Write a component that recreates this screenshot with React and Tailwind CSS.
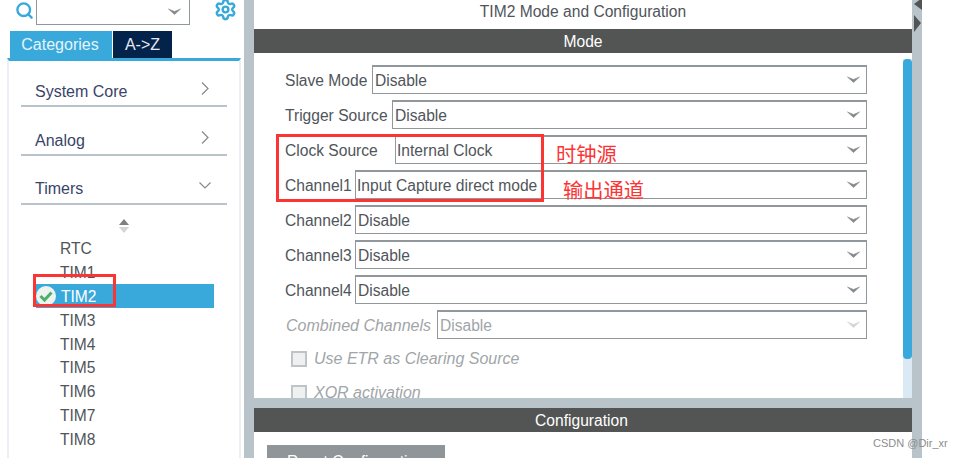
import React from "react";
import { Search, Settings } from "lucide-react";

function Chev({ light }) {
  const c = light ? "#d2d5d7" : "#85898c";
  return (
    <svg width="13" height="8" viewBox="0 0 13 8" className="shrink-0">
      <path d="M0.5 1 L6.5 6.5 L12.5 1 L6.5 3.5 Z" fill={c} stroke={c} strokeWidth="0.6" strokeLinejoin="round" />
    </svg>
  );
}

function SelectRow({ label, value, disabled, labelW, tight }) {
  return (
    <div className="flex h-[29px] items-center">
      <span className={`shrink-0 pt-[2px] ${labelW} ${disabled ? "pl-[1px] text-[16px] italic text-[#a1a5a8]" : "text-[#50555a]"}`}>{label}</span>
      <div className={`flex h-[29px] flex-1 items-center justify-between border border-t-2 border-[#90989c] pr-[6px] ${tight ? "pl-[1px]" : "pl-[2px]"} ${disabled ? "text-[#a1a5a8]" : "text-[#50555a]"}`}>
        <span className="pt-[2px]">{value}</span>
        <Chev light={disabled} />
      </div>
    </div>
  );
}

function CheckRow({ label }) {
  return (
    <div className="flex h-[16px] items-center gap-[7px] pl-[6px] text-[16px] italic text-[#a1a5a8]">
      <span className="h-[16px] w-[16px] shrink-0 border-2 border-[#bfc4c7] bg-[#eef0f2]" />
      <span>{label}</span>
    </div>
  );
}

function Category({ label, open, h }) {
  return (
    <div className={`mx-[13px] flex items-end justify-between border-b-2 border-[#b9c4ca] pl-[14px] text-[#3a4468] ${h} ${open ? "pb-[5px] pr-[16px]" : "pb-[4px] pr-[18px]"}`}>
      <span>{label}</span>
      {open ? (
        <svg width="12" height="7" viewBox="0 0 12 7" className="mb-[9px]">
          <path d="M0.5 0.5 L6 6 L11.5 0.5" fill="none" stroke="#85898c" strokeWidth="1.2" />
        </svg>
      ) : (
        <svg width="8" height="13" viewBox="0 0 8 13" className="mb-[6px]">
          <path d="M1 0.5 L7 6.5 L1 12.5" fill="none" stroke="#85898c" strokeWidth="1.2" />
        </svg>
      )}
    </div>
  );
}

const tims = ["TIM3", "TIM4", "TIM5", "TIM6", "TIM7", "TIM8"];

export default function App() {
  return (
    <div className="relative flex h-[458px] w-[962px] overflow-hidden bg-white font-['Liberation_Sans','Noto_Sans_CJK_SC',sans-serif] text-[16px] leading-[18px]">
      <aside className="flex w-[244px] shrink-0 flex-col">
        <div className="flex h-[31px] shrink-0 items-start pl-[15px]">
          <Search size={19} strokeWidth={3} className="mt-[1px] text-[#39a9dc]" />
          <div className="ml-[2px] flex h-[25px] w-[154px] items-center justify-end border border-t-0 border-[#90989c] pr-[8px]">
            <Chev />
          </div>
          <Settings size={23} strokeWidth={2.6} className="ml-[24px] mt-[-2px] text-[#39a9dc]" />
        </div>
        <div className="flex h-[27px] shrink-0 gap-[1px] pl-[10px]">
          <div className="flex w-[102px] items-center justify-center bg-[#39a9dc] pr-[2px] text-[#e6f4fb]">Categories</div>
          <div className="flex w-[59px] items-center justify-center bg-[#03234b] text-[#e6eaf0]">A-&gt;Z</div>
        </div>
        <div className="ml-[7px] mr-[3px] flex flex-1 flex-col overflow-hidden border-x-2 border-t-[3px] border-x-[#eceff3] border-t-[#39a9dc]">
          <div className="-mx-[1px] flex flex-col">
            <Category label="System Core" h="h-[46px]" />
            <Category label="Analog" h="h-[49px]" />
            <Category label="Timers" open h="h-[49px]" />
          </div>
          <div className="flex flex-col pt-[14px] text-[15.6px]">
            <div className="ml-[109px] flex h-[17px] w-[11px] flex-col items-center gap-[2px]">
              <span className="h-0 w-0 border-x-[5.5px] border-b-[6px] border-x-transparent border-b-[#7d8184]" />
              <span className="h-0 w-0 border-x-[5.5px] border-t-[6px] border-x-transparent border-t-[#d2d5d7]" />
            </div>
            <div className="pl-[51px] text-[#50555a]">
              <div className="flex h-[24px] items-center pt-[2px]">RTC</div>
              <div className="flex h-[24px] items-center pt-[2px]">TIM1</div>
            </div>
            <div className="ml-[27px] mr-[25px] flex h-[24px] items-center bg-[#39a9dc] text-white">
              <svg width="20" height="20" viewBox="0 0 20 20" className="shrink-0">
                <circle cx="10" cy="10" r="10" fill="#eef3ef" />
                <path d="M4.5 10 L8.5 14 L15.5 6.5" fill="none" stroke="#4fae6b" strokeWidth="3" />
              </svg>
              <span className="ml-[5px] pt-[2px]">TIM2</span>
            </div>
            <div className="pl-[51px] text-[#50555a]">
              {tims.map((t) => (
                <div key={t} className="flex h-[23.75px] items-center pt-[2px]">{t}</div>
              ))}
            </div>
          </div>
        </div>
      </aside>

      <div className="w-[10px] shrink-0 bg-[#b9c4ca]" />

      <main className="flex w-[658px] shrink-0 flex-col text-[15.6px]">
        <div className="flex h-[29px] shrink-0 items-center justify-center pb-[6px] text-[#50555a]">TIM2 Mode and Configuration</div>
        <div className="flex h-[24px] shrink-0 items-center justify-center bg-[#535554] pt-[2px] text-white">Mode</div>
        <div className="flex h-[345px] shrink-0 overflow-hidden">
          <div className="flex flex-1 flex-col gap-[6px] pl-[31px] pr-[36px] pt-[12px]">
            <SelectRow label="Slave Mode" value="Disable" labelW="w-[87px]" />
            <SelectRow label="Trigger Source" value="Disable" labelW="w-[107px]" />
            <SelectRow label="Clock Source" value="Internal Clock" labelW="w-[110px]" tight />
            <SelectRow label="Channel1" value="Input Capture direct mode" labelW="w-[70px]" tight />
            <SelectRow label="Channel2" value="Disable" labelW="w-[70px]" />
            <SelectRow label="Channel3" value="Disable" labelW="w-[70px]" />
            <SelectRow label="Channel4" value="Disable" labelW="w-[70px]" />
            <SelectRow label="Combined Channels" value="Disable" labelW="w-[152px]" disabled />
            <div className="mt-[6px] flex flex-col gap-[18px]">
              <CheckRow label="Use ETR as Clearing Source" />
              <CheckRow label="XOR activation" />
            </div>
          </div>
          <div className="mt-[6px] flex w-[9px] shrink-0 flex-col bg-[#dbe9f5]">
            <div className="h-[300px] rounded-[4px] bg-[#39a9dc]" />
          </div>
        </div>
        <div className="h-[10px] shrink-0 bg-[#b9c4ca]" />
        <div className="flex h-[24px] shrink-0 items-center justify-center bg-[#535554] pt-[2px] pr-[3px] text-white">Configuration</div>
        <div className="flex-1 pl-[13px] pt-[13px]">
          <div className="flex h-[34px] w-[178px] items-center justify-center bg-[#8f9599] text-white">Reset Configuration</div>
        </div>
      </main>

      <div className="w-[10px] shrink-0 bg-[#b9c4ca]" />

      <svg width="10" height="32" viewBox="0 0 10 32" className="absolute left-[912px] top-0">
        <path d="M2 4 L10 -2 L10 10 Z" fill="#535554" />
        <path d="M2 15 L9 23 L2 32 Z" fill="#535554" />
      </svg>

      <div className="absolute left-[33px] top-[274px] h-[33px] w-[83px] border-[3px] border-[#fb3434]" />
      <div className="absolute left-[276px] top-[134px] h-[68px] w-[268px] border-[3px] border-[#fb3434]" />
      <span className="absolute left-[556px] top-[143px] text-[20.3px] leading-[24px] text-[#fb3434]">时钟源</span>
      <span className="absolute left-[563px] top-[179px] text-[20.3px] leading-[24px] text-[#fb3434]">输出通道</span>
      <span className="absolute left-[873px] top-[436px] text-[11px] leading-[14px] text-[#8d8d8d]">CSDN @Dir_xr</span>
    </div>
  );
}
